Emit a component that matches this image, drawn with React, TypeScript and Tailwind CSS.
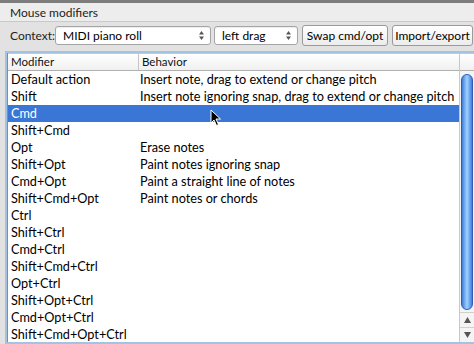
import React from "react";

const rows: [string, string][] = [
  ["Default action", "Insert note, drag to extend or change pitch"],
  ["Shift", "Insert note ignoring snap, drag to extend or change pitch"],
  ["Cmd", ""],
  ["Shift+Cmd", ""],
  ["Opt", "Erase notes"],
  ["Shift+Opt", "Paint notes ignoring snap"],
  ["Cmd+Opt", "Paint a straight line of notes"],
  ["Shift+Cmd+Opt", "Paint notes or chords"],
  ["Ctrl", ""],
  ["Shift+Ctrl", ""],
  ["Cmd+Ctrl", ""],
  ["Shift+Cmd+Ctrl", ""],
  ["Opt+Ctrl", ""],
  ["Shift+Opt+Ctrl", ""],
  ["Cmd+Opt+Ctrl", ""],
  ["Shift+Cmd+Opt+Ctrl", ""],
];

function Arrows() {
  return (
    <svg width="7" height="11" viewBox="0 0 7 11" className="shrink-0">
      <path d="M3.5 1 L6 4.5 L1 4.5 Z" fill="#555" />
      <path d="M3.5 10 L6 6.5 L1 6.5 Z" fill="#555" />
    </svg>
  );
}

function Select({ label, w }: { label: string; w: string }) {
  return (
    <div
      className={`${w} shrink-0 h-[19px] flex items-center justify-between pl-[7px] pr-[5px] bg-white border border-[#a5a5a5] rounded-[3px] shadow-[inset_0_1px_1px_rgba(0,0,0,0.08)]`}
    >
      <span className="text-[12px] text-black leading-none whitespace-nowrap">{label}</span>
      <Arrows />
    </div>
  );
}

function Button({ label, w }: { label: string; w: string }) {
  return (
    <div
      className={`${w} shrink-0 h-[21px] flex items-center justify-center bg-gradient-to-b from-white to-[#ececec] border border-[#9a9a9a] rounded-[3px] text-[12px] text-black leading-none whitespace-nowrap`}
    >
      {label}
    </div>
  );
}

export default function App() {
  return (
    <div
      className="w-[474px] h-[344px] overflow-hidden bg-[#e2e2e2] flex flex-col relative"
      style={{ fontFamily: 'Lato, "Open Sans", sans-serif' }}
    >
      <div className="h-[3px] bg-[#7d7d7d] shrink-0" />
      <div className="h-[19px] bg-[#ededed] border-b border-[#c9c9c9] pl-[10px] pt-[2px] flex items-center text-[12px] text-[#222] shrink-0">
        Mouse modifiers
      </div>
      <div className="h-[25px] flex items-center pl-[10px] shrink-0 mt-[1px]">
        <span className="text-[12px] text-[#222] w-[45px] shrink-0">Context:</span>
        <Select label="MIDI piano roll" w="w-[156px]" />
        <div className="w-[3px] shrink-0" />
        <Select label="left drag" w="w-[84px]" />
        <div className="w-[4px] shrink-0" />
        <Button label="Swap cmd/opt" w="w-[86px]" />
        <div className="w-[4px] shrink-0" />
        <Button label="Import/export" w="w-[81px]" />
      </div>
      <div className="ml-[5px] mt-[3px] flex-1 border-2 border-[#a4c3e2] border-r-0 border-b-0 bg-white flex flex-col min-h-0">
        <div className="flex flex-1 min-h-0">
          <div className="flex-1 flex flex-col min-w-0 border-l border-[#8a8a8a]">
            <div className="h-[18px] flex items-stretch bg-gradient-to-b from-white to-[#f0f0f0] border-b border-[#b0b0b0] border-t border-t-[#c8c8c8] text-[11.5px] text-[#111] shrink-0">
              <div className="w-[131px] shrink-0 pl-[3px] flex items-center border-r border-[#c4c4c4]">Modifier</div>
              <div className="flex-1 pl-[3px] flex items-center">Behavior</div>
            </div>
            <div className="flex flex-col">
              {rows.map(([m, b], i) => {
                const sel = i === 2;
                return (
                  <div
                    key={m}
                    className={`h-[17px] flex items-center text-[12.7px] whitespace-nowrap ${
                      sel ? "bg-[#3a76d6] text-white" : "text-black"
                    }`}
                  >
                    <div className="w-[132px] shrink-0 pl-[3px]">{m}</div>
                    <div className="flex-1 overflow-hidden">{b}</div>
                  </div>
                );
              })}
            </div>
          </div>
          <div className="w-[15px] flex flex-col border-l border-[#c8c8c8] bg-[#f4f4f4] shrink-0">
            <div className="h-[18px] border-b border-[#b0b0b0] border-t border-t-[#c8c8c8] bg-gradient-to-b from-white to-[#f0f0f0] shrink-0" />
            <div className="flex-1 flex flex-col px-[1px] pt-[3px] pb-[2px]">
              <div className="flex-1 rounded-full bg-gradient-to-r from-[#3f7fd8] via-[#9fd0ff] to-[#3f7fd8] border border-[#2a5fb5]" />
            </div>
            <div className="h-[15px] flex items-center justify-center border-t border-[#d0d0d0] shrink-0">
              <svg width="7" height="6" viewBox="0 0 7 6"><path d="M3.5 0 L7 6 L0 6 Z" fill="#555" /></svg>
            </div>
            <div className="h-[15px] flex items-center justify-center border-t border-[#d0d0d0] shrink-0">
              <svg width="7" height="6" viewBox="0 0 7 6"><path d="M3.5 6 L7 0 L0 0 Z" fill="#555" /></svg>
            </div>
          </div>
        </div>
        <div className="h-[2px] bg-[#a4c3e2] shrink-0" />
      </div>
      <svg
        className="absolute left-[210px] top-[109px]"
        width="12"
        height="18"
        viewBox="0 0 12 18"
      >
        <path d="M1 1 L1 14 L4 11 L6.5 16.5 L8.5 15.5 L6 10 L10.5 10 Z" fill="#000" stroke="#fff" strokeWidth="1" />
      </svg>
    </div>
  );
}
